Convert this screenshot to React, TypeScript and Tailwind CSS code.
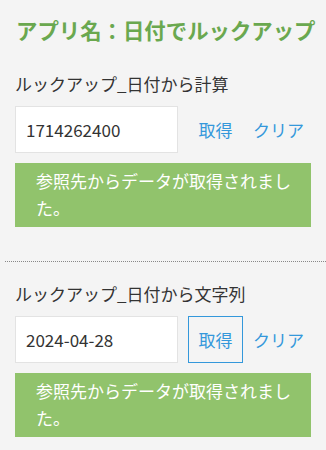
export default function App() {
  const font = { fontFamily: '"Noto Sans CJK JP", "Noto Sans", sans-serif' };
  return (
    <div className="w-[326px] h-[450px] bg-[#f4f4f4] overflow-hidden" style={font}>
      <div className="pl-[16px] pt-[16px] text-[21.4px] font-bold leading-[28px] text-[#6aa84f] whitespace-nowrap">
        アプリ名：日付でルックアップ
      </div>

      <div className="mt-[28px] pl-[15px] text-[17px] leading-[24px] text-[#333]">ルックアップ_日付から計算</div>
      <div className="mt-[10px] flex items-center pl-[15px]">
        <div className="w-[163px] h-[47px] bg-white border border-[#e3e3e3] flex items-center pl-[10px] text-[17px] text-[#333]">
          1714262400
        </div>
        <div className="ml-[10px] w-[55px] h-[47px] flex items-center justify-center text-[17px] text-[#3498db] border border-transparent">
          取得
        </div>
        <div className="ml-[10px] text-[17px] text-[#3498db]">クリア</div>
      </div>
      <div className="mt-[10px] mx-[15px] bg-[#91c36c] text-white text-[17px] leading-[27px] pl-[21px] pr-[16px] pt-[4px] pb-[6px]">
        参照先からデータが取得されました。
      </div>

      <div className="mt-[34px] ml-[5px] border-t border-dotted border-[#888]" />

      <div className="mt-[20px] pl-[15px] text-[17px] leading-[24px] text-[#333]">ルックアップ_日付から文字列</div>
      <div className="mt-[10px] flex items-center pl-[15px]">
        <div className="w-[163px] h-[47px] bg-white border border-[#e3e3e3] flex items-center pl-[10px] text-[17px] text-[#333]">
          2024-04-28
        </div>
        <div className="ml-[10px] w-[55px] h-[47px] flex items-center justify-center text-[17px] text-[#3498db] border border-[#3498db]">
          取得
        </div>
        <div className="ml-[10px] text-[17px] text-[#3498db]">クリア</div>
      </div>
      <div className="mt-[10px] mx-[15px] bg-[#91c36c] text-white text-[17px] leading-[27px] pl-[21px] pr-[16px] pt-[4px] pb-[6px]">
        参照先からデータが取得されました。
      </div>
    </div>
  );
}
